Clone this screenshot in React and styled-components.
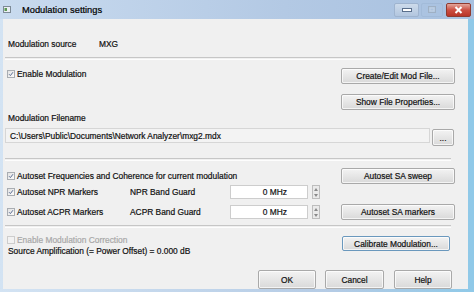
import styled, { createGlobalStyle, css } from "styled-components";

const Global = createGlobalStyle`
  html, body { margin: 0; padding: 0; overflow: hidden; background: #fff; }
  body { font-family: "Liberation Sans", Arial, sans-serif; }
`;

const Window = styled.div`
  width: 474px;
  height: 292px;
  display: flex;
  flex-direction: column;
  background: linear-gradient(to right, #d3e3f3, #b4cbe5 70%, #8fc9e8);
`;

const TitleBar = styled.div`
  height: 19px;
  display: flex;
  align-items: center;
  padding: 0 3px;
  background: linear-gradient(to right, #c9dbef, #b3c9e4 60%, #a8c1e0);
`;

const Title = styled.span`
  margin-left: 11px;
  font-size: 9.3px;
  color: #000;
  -webkit-text-stroke: 0.2px #000;
  flex: 1;
`;

const CaptionGroup = styled.div`
  display: flex;
  align-items: center;
  gap: 2px;
`;

const CaptionButton = styled.div`
  height: 14px;
  width: ${(p) => p.$w}px;
  display: flex;
  align-items: center;
  justify-content: center;
  box-sizing: border-box;
  border-radius: 2px;
  ${(p) =>
    p.$kind === "close"
      ? css`
          margin-left: 1px;
          background: linear-gradient(#e3a79c, #cc4f42 50%, #b93528);
          border: 1px solid #8f3a2f;
        `
      : p.$kind === "min"
      ? css`
          background: linear-gradient(#cddbeb, #b2c6df);
          border: 1px solid #9fb4cf;
        `
      : css`
          background: transparent;
          border: 1px solid rgba(150, 175, 205, 0.4);
        `}
`;

const Frame = styled.div`
  flex: 1;
  display: flex;
  padding: 0 6px 3px 3px;
`;

const Client = styled.div`
  flex: 1;
  background: #f0f0f0;
  display: flex;
  flex-direction: column;
  padding: 17px 13px 0 5px;
  font-size: 8.4px;
  color: #111;
  -webkit-text-stroke: 0.2px currentColor;
`;

const Row = styled.div`
  display: flex;
  align-items: ${(p) => p.$align || "center"};
  height: ${(p) => p.$h}px;
  margin-top: ${(p) => p.$mt || 0}px;
  justify-content: ${(p) => p.$justify || "flex-start"};
`;

const Text = styled.span`
  width: ${(p) => (p.$w ? `${p.$w}px` : "auto")};
  flex-shrink: 0;
  white-space: nowrap;
  color: ${(p) => (p.$disabled ? "#a8a8a8" : "#111")};
`;

const Grow = styled.div`
  flex: 1;
`;

const Separator = styled.div`
  height: 1px;
  margin: ${(p) => p.$mt}px 4px 0 -3px;
  border-top: 1px solid #c6c6c6;
  border-bottom: 1px solid #fdfdfd;
`;

const CheckWrap = styled.label`
  display: flex;
  align-items: center;
  gap: 2px;
  margin-left: -1px;
  width: ${(p) => (p.$w ? `${p.$w}px` : "auto")};
  flex-shrink: 0;
  height: 10px;
  margin-top: ${(p) => p.$mt || 0}px;
`;

const Box = styled.span`
  width: 8px;
  height: 8px;
  box-sizing: border-box;
  display: flex;
  align-items: center;
  justify-content: center;
  border: 1px solid ${(p) => (p.$disabled ? "#cdcdcd" : "#a9adb2")};
  background: ${(p) =>
    p.$disabled ? "#f2f2f2" : "linear-gradient(135deg, #e2e2e2, #fbfbfb)"};
`;

function Check({ checked = true, disabled, children, w, mt }) {
  return (
    <CheckWrap $w={w} $mt={mt}>
      <Box $disabled={disabled}>
        {checked && (
          <svg width="6" height="6" viewBox="0 0 6 6">
            <path d="M1 3.2 L2.4 4.6 L5 1.2" fill="none" stroke="#5d6f95" strokeWidth="1" />
          </svg>
        )}
      </Box>
      <Text $disabled={disabled}>{children}</Text>
    </CheckWrap>
  );
}

const Button = styled.div`
  width: ${(p) => p.$w}px;
  height: ${(p) => p.$h || 16}px;
  margin-top: ${(p) => p.$mt || 0}px;
  margin-left: ${(p) => p.$ml || 0}px;
  margin-right: ${(p) => p.$mr || 0}px;
  flex-shrink: 0;
  box-sizing: border-box;
  display: flex;
  align-items: center;
  justify-content: center;
  border-radius: 2px;
  border: 1px solid ${(p) => (p.$default ? "#6a98bd" : "#a9a9a9")};
  background: linear-gradient(#f3f3f3, #e6e6e6 50%, #d9d9d9);
  box-shadow: inset 0 0 0 1px rgba(255, 255, 255, 0.7);
  color: #111;
  white-space: nowrap;
`;

const TextBox = styled.div`
  width: 425px;
  height: 15px;
  margin-left: -3px;
  box-sizing: border-box;
  display: flex;
  align-items: center;
  padding-left: 4px;
  border: 1px solid #d6d6d6;
  background: #f3f3f3;
  white-space: nowrap;
`;

const NumberBox = styled.div`
  width: 78px;
  height: 14px;
  box-sizing: border-box;
  display: flex;
  align-items: center;
  justify-content: flex-end;
  padding-right: 20px;
  border: 1px solid #cdcdcd;
  background: #fff;
  flex-shrink: 0;
`;

const SpinBox = styled.div`
  width: 8px;
  height: 14px;
  margin-left: 4px;
  box-sizing: border-box;
  border: 1px solid #bdbdbd;
  background: #eaeaea;
  display: flex;
  flex-direction: column;
  align-items: center;
  justify-content: space-around;
  flex-shrink: 0;
`;

function Spinner() {
  return (
    <SpinBox>
      <svg width="4" height="3" viewBox="0 0 4 3">
        <path d="M0 3 L2 0 L4 3 Z" fill="#8a8a8a" />
      </svg>
      <svg width="4" height="3" viewBox="0 0 4 3">
        <path d="M0 0 L4 0 L2 3 Z" fill="#8a8a8a" />
      </svg>
    </SpinBox>
  );
}

const Stack = styled.div`
  display: flex;
  flex-direction: column;
  margin-top: ${(p) => p.$mt || 0}px;
`;

const Line = styled.div`
  height: ${(p) => p.$h}px;
  display: flex;
  align-items: center;
`;

export default function App() {
  return (
    <>
      <Global />
      <Window>
        <TitleBar>
          <svg width="8" height="7" viewBox="0 0 8 7">
            <rect x="0.5" y="0.5" width="7" height="6" fill="#e9eef3" stroke="#7d8a96" />
            <rect x="1.5" y="2" width="2.5" height="3" fill="#5c9a52" />
          </svg>
          <Title>Modulation settings</Title>
          <CaptionGroup>
            <CaptionButton $kind="min" $w={25}>
              <svg width="10" height="4" viewBox="0 0 10 4">
                <rect x="0.5" y="0.5" width="9" height="3" fill="#fff" stroke="#5a6f8c" />
              </svg>
            </CaptionButton>
            <CaptionButton $kind="max" $w={22}>
              <svg width="8" height="7" viewBox="0 0 8 7">
                <rect x="0.5" y="0.5" width="7" height="6" fill="none" stroke="#9fb0c4" />
                <rect x="2" y="2" width="4" height="3" fill="none" stroke="#c4d1df" />
              </svg>
            </CaptionButton>
            <CaptionButton $kind="close" $w={25}>
              <svg width="9" height="8" viewBox="0 0 9 8">
                <path d="M1.5 1 L7.5 7 M7.5 1 L1.5 7" stroke="#fff" strokeWidth="2" />
              </svg>
            </CaptionButton>
          </CaptionGroup>
        </TitleBar>
        <Frame>
          <Client>
            <Row $h={16}>
              <Text $w={91}>Modulation source</Text>
              <Text>MXG</Text>
            </Row>
            <Separator $mt={5} />
            <Row $h={16} $mt={8} $align="flex-start">
              <Check mt={1}>Enable Modulation</Check>
              <Grow />
              <Button $w={114}>Create/Edit Mod File...</Button>
            </Row>
            <Row $h={16} $mt={10} $justify="flex-end">
              <Button $w={114}>Show File Properties...</Button>
            </Row>
            <Row $h={12} $mt={2}>
              <Text>Modulation Filename</Text>
            </Row>
            <Row $h={18} $mt={4} $align="flex-start">
              <TextBox>C:\Users\Public\Documents\Network Analyzer\mxg2.mdx</TextBox>
              <Button $w={22} $h={17} $mt={1} $ml={2}>...</Button>
            </Row>
            <Separator $mt={12} />
            <Row $h={16} $mt={7}>
              <Check>Autoset Frequencies and Coherence for current modulation</Check>
              <Grow />
              <Button $w={114}>Autoset SA sweep</Button>
            </Row>
            <Row $h={14} $mt={1}>
              <Check w={123}>Autoset NPR Markers</Check>
              <Text $w={100}>NPR Band Guard</Text>
              <NumberBox>0 MHz</NumberBox>
              <Spinner />
            </Row>
            <Row $h={16} $mt={5}>
              <Check w={123}>Autoset ACPR Markers</Check>
              <Text $w={100}>ACPR Band Guard</Text>
              <NumberBox>0 MHz</NumberBox>
              <Spinner />
              <Grow />
              <Button $w={114}>Autoset SA markers</Button>
            </Row>
            <Separator $mt={5} />
            <Row $h={23} $mt={8} $align="flex-start">
              <Stack $mt={-1}>
                <Line $h={10}>
                  <Check checked={false} disabled>
                    Enable Modulation Correction
                  </Check>
                </Line>
                <Line $h={12}>
                  <Text>Source Amplification (= Power Offset) = 0.000 dB</Text>
                </Line>
              </Stack>
              <Grow />
              <Button $w={108} $h={15} $mr={5} $default>
                Calibrate Modulation...
              </Button>
            </Row>
            <Row $h={19} $mt={11} $justify="flex-end">
              <Button $w={58} $h={19}>OK</Button>
              <Button $w={59} $h={19} $ml={9}>Cancel</Button>
              <Button $w={58} $h={19} $ml={10} $mr={3}>Help</Button>
            </Row>
          </Client>
        </Frame>
      </Window>
    </>
  );
}
